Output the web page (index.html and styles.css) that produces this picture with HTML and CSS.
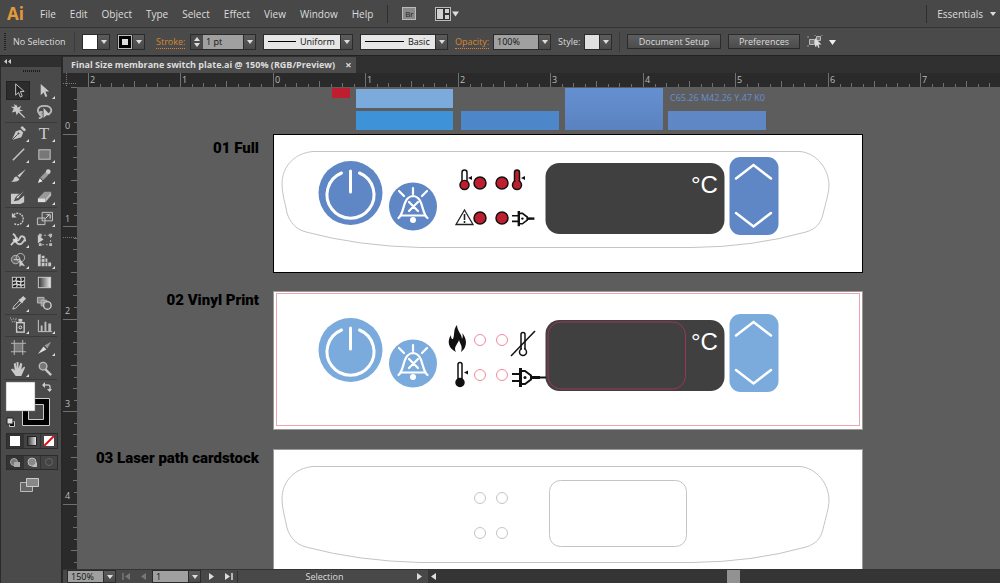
FILE: index.html
```html
<!DOCTYPE html>
<html lang="en">

<head>
    <meta charset="UTF-8">
    <title>Final Size membrane switch plate.ai</title>
    <link rel="stylesheet" href="styles.css">
</head>

<body>
    <header class="menubar">
        <span class="logo">Ai</span>
        <nav class="menus">
            <button>File</button>
            <button>Edit</button>
            <button>Object</button>
            <button>Type</button>
            <button>Select</button>
            <button>Effect</button>
            <button>View</button>
            <button>Window</button>
            <button>Help</button>
        </nav>
        <span class="divider"></span>
        <button class="bridge">Br</button>
        <button class="arrange" aria-label="Arrange documents">
            <svg width="24" height="14" viewBox="0 0 24 14">
                <rect x="0.5" y="0.5" width="15" height="13" fill="#333" stroke="#bbb" />
                <path d="M2 2h6v10H2zM10 2h4v4h-4zM10 8h4v4h-4z" fill="#d0d0d0" />
                <path d="M17 4.500h7l-3.500 5z" fill="#ddd" />
            </svg>
        </button>
        <button class="workspace">Essentials <span class="caret"></span></button>
    </header>

    <div class="options">
        <span class="grip"></span>
        <span class="status">No Selection</span>
        <span class="sep"></span>
        <div class="combo">
            <button class="swatch white" aria-label="Fill"></button>
            <button class="drop" aria-label="Fill menu"><span class="caret"></span></button>
        </div>
        <div class="combo">
            <button class="swatch ring" aria-label="Stroke color"></button>
            <button class="drop" aria-label="Stroke color menu"><span class="caret"></span></button>
        </div>
        <label class="link first" for="stroke"><span>Stroke:</span></label>
        <div class="combo stroke">
            <button class="spin" aria-label="Step"><span class="caret up"></span><span class="caret"></span></button>
            <input type="text" id="stroke" value="1 pt">
            <button class="drop" aria-label="Stroke weights"><span class="caret"></span></button>
        </div>
        <div class="combo profile">
            <span class="line"></span>
            <select aria-label="Width profile">
                <option>Uniform</option>
            </select>
            <span class="drop"><span class="caret"></span></span>
        </div>
        <div class="combo brush">
            <span class="line"></span>
            <select aria-label="Brush">
                <option>Basic</option>
            </select>
            <span class="drop"><span class="caret"></span></span>
        </div>
        <label class="link second" for="opacity"><span>Opacity:</span></label>
        <div class="combo opacity">
            <input type="text" id="opacity" value="100%">
            <button class="drop" aria-label="Opacity values"><span class="caret"></span></button>
        </div>
        <span class="style-label">Style:</span>
        <div class="combo">
            <button class="swatch grey" aria-label="Style"></button>
            <button class="drop" aria-label="Style menu"><span class="caret"></span></button>
        </div>
        <span class="sep"></span>
        <button class="push wide">Document Setup</button>
        <button class="push">Preferences</button>
        <button class="similar" aria-label="Select similar objects">
            <svg width="30" height="14" viewBox="0 0 30 14">
                <path d="M2.500 4.500h5v5h-5zM9.500 1.500h4v4h-4z" fill="#777" stroke="#bbb" />
                <path d="M0 2h2M0 11h2M8 11h2M7 0h2M14 0h2" stroke="#999" />
                <path d="M8 3v9l2-2 1.500 3 1-.500-1-3h3z" fill="#ddd" />
                <path d="M22 5h7l-3.500 5z" fill="#eee" />
            </svg>
        </button>
    </div>

    <div class="main">
        <aside class="tools">
            <div class="tools-head">
                <svg width="8" height="6" viewBox="0 0 8 6"><path d="M3 0v5L0 2.500zM7 0v5L4 2.500z" fill="#ccc" /></svg>
            </div>
            <div class="tools-grip"><span></span></div>

            <div class="group">
                <button class="tool active" aria-label="Selection"><svg viewBox="0 0 18 18"><path d="M6 2v12l3-3 2 5 2-1-2-5h4z" fill="#222" stroke="#ccc" /></svg></button>
                <button class="tool more" aria-label="Direct selection"><svg viewBox="0 0 18 18"><path d="M5 2v12l3-3 2 5 2-1-2-5h4z" fill="#c8c8c8" /></svg></button>
                <button class="tool" aria-label="Magic wand"><svg viewBox="0 0 18 18"><path d="M7 1l1 4 4-2-2 4 4 1-4 1 6 6-1 1-6-6-2 3-1-4-4 1 2-4-3-2 4 0-1-3 3 2z" fill="#c8c8c8" /></svg></button>
                <button class="tool" aria-label="Lasso"><svg viewBox="0 0 18 18"><path d="M7 12C0 12 0 3 9 3s9 8 3 9M7 10c-3-2-5 2-2 3s0 3-2 3" fill="none" stroke="#b8b8b8" stroke-width="2" /><path d="M8 5v11l3-3h4z" fill="#ccc" /></svg></button>
            </div>
            <div class="group">
                <button class="tool more" aria-label="Pen"><svg viewBox="0 0 18 18"><path d="M2 16L6 7l5-2 3 3-2 5z" fill="#c8c8c8" /><path d="M11 3l2-2 4 4-2 2z" fill="#c8c8c8" /><path d="M2 16l6-6" stroke="#444" /><circle cx="9" cy="9" r="1" fill="#444" /></svg></button>
                <button class="tool more serif">T</button>
                <button class="tool more" aria-label="Line"><svg viewBox="0 0 18 18"><path d="M3 15L15 3" stroke="#c8c8c8" stroke-width="1.500" /></svg></button>
                <button class="tool more" aria-label="Rectangle"><svg viewBox="0 0 18 18"><rect x="3" y="4" width="12" height="10" fill="#777" stroke="#c8c8c8" /></svg></button>
                <button class="tool" aria-label="Paintbrush"><svg viewBox="0 0 18 18"><path d="M17 2l-7 9-2-2z" fill="#c8c8c8" /><path d="M1 15c4 0 2-5 6-5l3 3c-2 3-6 3-9 2z" fill="#c8c8c8" /></svg></button>
                <button class="tool more" aria-label="Pencil"><svg viewBox="0 0 18 18"><path d="M2 17l2-5 3 3z" fill="#eee" /><path d="M4.500 11l6-6 3 3-6 6z" fill="#999" /><circle cx="13" cy="5" r="2.500" fill="#ccc" /></svg></button>
                <button class="tool" aria-label="Blob brush"><svg viewBox="0 0 18 18"><path d="M1 6h9L6 10l-2 4 5-1 6-5v7l-4 2H1z" fill="#c8c8c8" /><path d="M17 1l-6 7-2 3-3 1 1-3 3-2z" fill="#ddd" stroke="#444" /></svg></button>
                <button class="tool more" aria-label="Eraser"><svg viewBox="0 0 18 18"><path d="M2 11l7-7h7l-6 7z" fill="#999" /><path d="M2 11h8v4H2z" fill="#ddd" /><path d="M10 11l6-7v4l-6 7z" fill="#bbb" /></svg></button>
            </div>
            <div class="group">
                <button class="tool more" aria-label="Rotate"><svg viewBox="0 0 18 18"><path d="M4 5a6 6 0 1 1 0 9" fill="none" stroke="#c8c8c8" stroke-width="1.500" stroke-dasharray="2 1" /><path d="M2 3v5h5z" fill="#c8c8c8" /></svg></button>
                <button class="tool more" aria-label="Scale"><svg viewBox="0 0 18 18"><path d="M6.500 2.500h11v9h-11zM1.500 8.500h8v7h-8z" fill="#555" stroke="#c8c8c8" /><path d="M10 9l4-4M11 5h4v4" fill="none" stroke="#ddd" /></svg></button>
                <button class="tool more" aria-label="Width"><svg viewBox="0 0 18 18"><path d="M3 3c5 2 2 7 5 7s2-6 6-4-1 4 3 4M1 15l7-8M3 9c4 1 3 5 7 5s3-4 6-4" fill="none" stroke="#c8c8c8" stroke-width="2" /><circle cx="6" cy="10" r="2" fill="#ddd" /></svg></button>
                <button class="tool" aria-label="Free transform"><svg viewBox="0 0 18 18"><path d="M4.500 4.500h11v10h-11z" fill="none" stroke="#bbb" stroke-dasharray="2 2" /><path d="M3 3h3v3H3zM14 3h3v3h-3zM14 13h3v3h-3zM3 13h3v3H3z" fill="#bbb" /><path d="M2 4v9l6-4z" fill="#ccc" /></svg></button>
                <button class="tool more" aria-label="Shape builder"><svg viewBox="0 0 18 18"><circle cx="6" cy="8" r="4.500" fill="#666" stroke="#bbb" /><circle cx="11" cy="6" r="4.500" fill="none" stroke="#bbb" /><path d="M10 7v9l2-2 4 1z" fill="#ccc" /><path d="M4 8h6" stroke="#ccc" /></svg></button>
                <button class="tool more" aria-label="Perspective grid"><svg viewBox="0 0 18 18"><path d="M2 3l3-1v13H2zM6 4h3v11H6zM10 7h2v8h-2zM13 11h3v4h-3z" fill="#c8c8c8" /><path d="M5 7h4M5 11h7" stroke="#555" /></svg></button>
            </div>
            <div class="group">
                <button class="tool" aria-label="Mesh"><svg viewBox="0 0 18 18"><rect x="2.500" y="3.500" width="13" height="11" fill="#222" stroke="#ccc" /><path d="M3 8c5-3 8 3 12-1M3 12c4-4 8 2 12-1M7 4c-3 4 3 6 0 10M11 4c3 3-2 6 1 10" fill="none" stroke="#ddd" stroke-width="1.300" /></svg></button>
                <button class="tool" aria-label="Gradient"><svg viewBox="0 0 18 18"><defs><linearGradient id="grey-ramp"><stop offset="0" stop-color="#333" /><stop offset="1" stop-color="#eee" /></linearGradient></defs><rect x="2.500" y="3.500" width="13" height="11" fill="url(#grey-ramp)" stroke="#ccc" /></svg></button>
                <button class="tool more" aria-label="Eyedropper"><svg viewBox="0 0 18 18"><path d="M3 15l1-3 6-6 2 2-6 6z" fill="none" stroke="#ccc" /><path d="M9 5l2-1 3-3 3 3-3 3-1 2z" fill="#ccc" /></svg></button>
                <button class="tool" aria-label="Blend"><svg viewBox="0 0 18 18"><path d="M1.500 2.500h7v6h-7zM5.500 5.500h6v6h-6z" fill="#888" stroke="#bbb" /><circle cx="12" cy="11" r="4" fill="#555" stroke="#ccc" stroke-width="1.500" /></svg></button>
            </div>
            <div class="group">
                <button class="tool more" aria-label="Symbol sprayer"><svg viewBox="0 0 18 18"><path d="M1 3h1M3 2h1M5 3h1M2 5h1M4 5h1M6 2h1M0 1h1M6 5h1" stroke="#ccc" /><rect x="7" y="6" width="8" height="10" fill="#444" stroke="#ccc" stroke-width="1.500" /><path d="M9 2h4v3H9z" fill="#ccc" /><circle cx="11" cy="11" r="1.500" fill="none" stroke="#eee" /></svg></button>
                <button class="tool more" aria-label="Graph"><svg viewBox="0 0 18 18"><path d="M2.500 3v12.500H17" fill="none" stroke="#ccc" /><path d="M5 9h2v6H5zM9 5h2v10H9zM13 7h3v8h-3z" fill="#bbb" /></svg></button>
            </div>
            <div class="group">
                <button class="tool" aria-label="Artboard"><svg viewBox="0 0 18 18"><rect x="4.500" y="4.500" width="9" height="9" fill="#777" /><path d="M4.500 1v16M13.500 1v16M1 4.500h16M1 13.500h16" stroke="#bbb" /></svg></button>
                <button class="tool more" aria-label="Slice"><svg viewBox="0 0 18 18"><path d="M2 16l6-8 3 3z" fill="#ddd" /><path d="M9 7l7-4-4 7z" fill="#999" /></svg></button>
                <button class="tool more" aria-label="Hand"><svg viewBox="0 0 18 18"><path d="M6 17L1 10l2-1 2 2-1-7 2-1 1 6V2h2v7l2-6 2 1-1 6 3-3 1 1-4 9z" fill="#c8c8c8" /></svg></button>
                <button class="tool" aria-label="Zoom"><svg viewBox="0 0 18 18"><circle cx="7.500" cy="6.500" r="4" fill="#777" stroke="#bbb" stroke-width="1.500" /><path d="M10 10l6 6" stroke="#c8c8c8" stroke-width="2.500" /></svg></button>
            </div>

            <div class="paint">
                <svg width="52" height="50" viewBox="0 0 52 50">
                    <path d="M17.500 18.500h27v27h-27z" fill="#000" stroke="#ccc" />
                    <path d="M23.500 24.500h15v15h-15z" fill="#494949" stroke="#ccc" />
                    <path d="M1 2h29v29H1z" fill="#fff" stroke="#777" stroke-width=".5" />
                    <path d="M39 5h4a2 2 0 0 1 2 2v4" fill="none" stroke="#bbb" stroke-width="1.500" />
                    <path d="M40 2v6l-3-3zM42 9h5l-2.500 3z" fill="#ccc" />
                    <path d="M4.500 41.500h5v5h-5z" fill="#111" stroke="#ccc" />
                    <path d="M2 38h6v6H2z" fill="#ddd" stroke="#222" />
                </svg>
            </div>
            <div class="modes">
                <button aria-label="Color"><svg width="16" height="14"><path d="M3 2h10v10H3z" fill="#fff" /></svg></button>
                <button aria-label="Gradient fill"><svg width="16" height="14"><path d="M3.500 2.500h9v9h-9z" fill="url(#grey-ramp)" stroke="#222" /></svg></button>
                <button aria-label="None"><svg width="16" height="14"><path d="M3 2h10v10H3z" fill="#fff" /><path d="M3 12L13 2" stroke="#d11" stroke-width="2" /></svg></button>
            </div>
            <div class="modes draw">
                <button aria-label="Draw normal"><svg width="16" height="13"><circle cx="7" cy="6" r="3.500" fill="#777" stroke="#aaa" /><path d="M7 6h6v5H7z" fill="#aaa" /></svg></button>
                <button aria-label="Draw behind"><svg width="16" height="13"><circle cx="8" cy="6" r="4" fill="#888" stroke="#bbb" /><path d="M8 11h5V6z" fill="#bbb" /></svg></button>
                <button aria-label="Draw inside"><svg width="16" height="13"><circle cx="8" cy="6" r="3.500" fill="none" stroke="#666" /></svg></button>
            </div>
            <button class="screen" aria-label="Screen mode"><svg width="20" height="14" viewBox="0 0 20 14"><path d="M.5 4.500h12v9H.5z" fill="#666" stroke="#bbb" /><path d="M6.500 .5h12v8h-12z" fill="#888" stroke="#ccc" /></svg></button>
        </aside>

        <section class="document">
            <div class="tabs">
                <div class="tab">Final Size membrane switch plate.ai @ 150% (RGB/Preview) <button aria-label="Close">×</button></div>
            </div>

            <svg class="ruler-x" width="100%" height="14">
                <defs>
                    <path id="inch-x" d="M.5 0v14M12.500 11v3M23.500 10v4M35.500 11v3M46.500 8v6M58.500 11v3M69.500 10v4M81.500 11v3" />
                </defs>
                <g class="ticks">
                    <use href="#inch-x" x="25" />
                    <use href="#inch-x" x="117" />
                    <use href="#inch-x" x="210" />
                    <use href="#inch-x" x="302" />
                    <use href="#inch-x" x="395" />
                    <use href="#inch-x" x="487" />
                    <use href="#inch-x" x="580" />
                    <use href="#inch-x" x="672" />
                    <use href="#inch-x" x="765" />
                    <use href="#inch-x" x="857" />
                </g>
                <rect class="corner" width="14" height="14" />
                <path class="dots" d="M3.500 0v14M0 10.500h14" />
                <g class="numbers">
                    <text x="27" y="10">2</text>
                    <text x="119" y="10">1</text>
                    <text x="212" y="10">0</text>
                    <text x="304" y="10">1</text>
                    <text x="397" y="10">2</text>
                    <text x="489" y="10">3</text>
                    <text x="582" y="10">4</text>
                    <text x="674" y="10">5</text>
                    <text x="767" y="10">6</text>
                    <text x="859" y="10">7</text>
                </g>
            </svg>

            <div class="view">
                <svg class="ruler-y" width="14" height="100%">
                    <defs>
                        <path id="inch-y" d="M0 .5h14M11 12.500h3M10 23.500h4M11 35.500h3M8 46.500h6M11 58.500h3M10 69.500h4M11 81.500h3" />
                    </defs>
                    <g class="ticks">
                        <use href="#inch-y" y="-46" />
                        <use href="#inch-y" y="47" />
                        <use href="#inch-y" y="139" />
                        <use href="#inch-y" y="232" />
                        <use href="#inch-y" y="324" />
                        <use href="#inch-y" y="417" />
                    </g>
                    <path class="dots" d="M0 150.500h14" />
                    <g class="numbers">
                        <text x="2" y="42">0</text>
                        <text x="2" y="135">1</text>
                        <text x="2" y="227">2</text>
                        <text x="2" y="320">3</text>
                        <text x="2" y="412">4</text>
                    </g>
                </svg>

                <div class="canvas">
                    <!-- colour swatches above the first artboard -->
                    <svg class="swatches" width="440" height="44">
                        <defs>
                            <linearGradient id="blue-ramp" x2="0" y2="1"><stop offset="0" stop-color="#6590d0" /><stop offset="1" stop-color="#5a82c0" /></linearGradient>
                        </defs>
                        <rect x="2" y="1" width="18" height="10" fill="#be1e2d" />
                        <rect x="26" y="2" width="97" height="19" fill="#7aabdc" />
                        <rect x="26" y="24" width="97" height="19" fill="#3e93d8" />
                        <rect x="131" y="24" width="98" height="19" fill="#4e87c9" />
                        <rect x="235" y="1" width="98" height="42" fill="url(#blue-ramp)" />
                        <rect x="338" y="24" width="98" height="19" fill="#5f87c5" />
                        <text x="340" y="14">C65.26 M42.26 Y.47 K0</text>
                    </svg>

                    <h2 class="name name-full">01 Full</h2>
                    <h2 class="name name-vinyl">02 Vinyl Print</h2>
                    <h2 class="name name-laser">03 Laser path cardstock</h2>

                    <svg class="board full" viewBox="0 0 590 139">
                        <defs>
                            <path id="plate" d="M40 17.500H527C543 19 556 34 556 52C556 58 553 68 550 80C548 89 543 95 533 98Q480 113 419 113.500H147Q85 112 33 98C22 95 17 88 14 79C12 68 9 60 9 50C9 32 22 19 40 17.500z" />
                            <g id="keys">
                                <circle cx="77.500" cy="59" r="32" />
                                <circle cx="140" cy="72.500" r="24" />
                                <rect x="456.500" y="23" width="49" height="78" rx="11" />
                                <g fill="none" stroke="#fff" stroke-width="3" stroke-linecap="round" stroke-linejoin="round">
                                    <path d="M68.500 39a23.500 23.500 0 1 0 18 0M77.500 37v21" />
                                    <g stroke-width="2.200">
                                        <path d="M125.500 84C132 79 129 63 140 62C151 63 148 79 154.500 84L152 81.500H128z" />
                                        <path d="M136 68l9 9M145 68l-9 9M140 54v6M126 57l5 5M154 57l-5 5" />
                                    </g>
                                    <path d="M463 44.500L480.500 31L498 44.500M463 79L480.500 92.500L498 79" stroke-width="2.500" stroke-linejoin="miter" />
                                </g>
                                <circle cx="140" cy="86" r="3" fill="#fff" />
                            </g>
                            <rect id="display" x="272.500" y="29" width="179" height="71" rx="14" fill="#404040" />
                            <!-- plug, prongs to the left -->
                            <g id="plug">
                                <path d="M0 6h8M0 13h8M17 9.500h6" stroke-width="2" />
                                <path d="M9 3h4l6 4.500v4L13 16H9z" fill="#fff" stroke-width="2" />
                                <path d="M8.500 0v19" stroke-width="3" />
                                <circle cx="13" cy="9.500" r="1.500" fill="#111" stroke="none" />
                                <path d="M19 9.500h9" stroke-width="3" />
                            </g>
                        </defs>
                        <use href="#plate" class="cut" />
                        <use href="#keys" fill="#5f87c5" />
                        <use href="#display" />
                        <text class="unit" x="418" y="59">°C</text>
                        <g fill="#be1e2d" stroke="#111" stroke-width="1.500">
                            <circle cx="207" cy="49" r="6" />
                            <circle cx="229" cy="49" r="6" />
                            <circle cx="207" cy="84" r="6" />
                            <circle cx="229" cy="84" r="6" />
                            <path d="M189 48V38.500a2.500 2.500 0 0 1 5 0V48" fill="#fff" />
                            <circle cx="191.500" cy="51" r="4.500" />
                            <path d="M241.500 48V38.500a2.500 2.500 0 0 1 5 0V48" />
                            <circle cx="244" cy="51" r="4.500" />
                            <path d="M190 47h3v4h-3zM242.500 45h3v6h-3z" stroke="none" />
                        </g>
                        <path d="M199 42v4l-4-2zM252 42v4l-4-2z" fill="#111" />
                        <g fill="none" stroke="#222">
                            <path d="M191.500 76L200 90.500h-17z" stroke-width="1.300" />
                            <path d="M191.500 80v6M191.500 87v2" stroke-width="1.600" />
                            <use href="#plug" transform="translate(239 77) scale(.8)" stroke="#111" />
                        </g>
                    </svg>

                    <svg class="board vinyl" viewBox="0 0 590 139">
                        <rect x="3.500" y="2.500" width="583" height="132" fill="none" stroke="#f0a4b0" />
                        <use href="#keys" fill="#7aabdc" />
                        <use href="#display" />
                        <rect x="275" y="31" width="137.500" height="67" rx="13" fill="none" stroke="#9c3558" />
                        <text class="unit" x="418" y="59">°C</text>
                        <g fill="none" stroke="#f08a9c">
                            <circle cx="207" cy="49" r="5.500" />
                            <circle cx="229" cy="49" r="5.500" />
                            <circle cx="207" cy="84" r="5.500" />
                            <circle cx="229" cy="84" r="5.500" />
                        </g>
                        <path d="M183 61C175 57 174 50 178 44C178 48 179 48 180 48C182 43 180 39 184 34C184 40 189 43 189 48C190 46 190 44 189 42C194 47 195 56 188 61C190 55 187 53 186 49C185 53 180 56 183 61z" fill="#111" />
                        <g fill="#fff" stroke="#111" stroke-width="1.500">
                            <path d="M248 58V43.500a2 2 0 0 1 4 0V58" />
                            <circle cx="250" cy="61" r="3.500" />
                            <path d="M249 56h2v4h-2z" stroke="none" />
                            <path d="M238 65L262 40" />
                            <path d="M185 88V73.500a2 2 0 0 1 4 0V88" />
                            <circle cx="187" cy="91.500" r="4" fill="#111" />
                            <path d="M195 79.500v4l-4-2z" fill="#111" stroke="none" />
                            <use href="#plug" x="239" y="77" />
                            <path d="M264 86.500h9" stroke-width="2" />
                        </g>
                    </svg>

                    <svg class="board laser" viewBox="0 0 590 139">
                        <use href="#plate" class="cut" />
                        <g class="cut">
                            <circle cx="207" cy="49" r="5.500" />
                            <circle cx="229" cy="49" r="5.500" />
                            <circle cx="207" cy="84" r="5.500" />
                            <circle cx="229" cy="84" r="5.500" />
                            <rect x="276.500" y="31.500" width="137" height="66" rx="11" />
                        </g>
                    </svg>
                </div>
            </div>

            <footer class="statusbar">
                <div class="combo small">
                    <input type="text" value="150%" aria-label="Zoom level">
                    <button class="drop" aria-label="Zoom values"><span class="caret"></span></button>
                </div>
                <button class="page" aria-label="First artboard" disabled><svg width="9" height="8"><path d="M1 0v7" stroke="#777" stroke-width="1.500" /><path d="M8 0v7L3 3.500z" fill="#777" /></svg></button>
                <button class="page" aria-label="Previous artboard" disabled><svg width="9" height="8"><path d="M7 0v7L2 3.500z" fill="#777" /></svg></button>
                <div class="combo small">
                    <input type="text" value="1" aria-label="Artboard">
                    <button class="drop" aria-label="Artboard list"><span class="caret"></span></button>
                </div>
                <button class="page" aria-label="Next artboard"><svg width="9" height="8"><path d="M2 0v7l5-3.500z" fill="#ddd" /></svg></button>
                <button class="page" aria-label="Last artboard"><svg width="9" height="8"><path d="M8 0v7" stroke="#ddd" stroke-width="1.500" /><path d="M1 0v7l5-3.500z" fill="#ddd" /></svg></button>
                <span class="current">Selection</span>
                <button class="page" aria-label="Status menu"><svg width="9" height="8"><path d="M2 0v7l5-3.500z" fill="#ddd" /></svg></button>
                <div class="scroll">
                    <svg width="6" height="8"><path d="M5 0v7L0 3.500z" fill="#ddd" /></svg>
                    <span class="thumb"></span>
                </div>
            </footer>
        </section>
    </div>
</body>

</html>
```

FILE: styles.css
```css
* {
    box-sizing: border-box;
}

body {
    margin: 0;
    height: 100vh;
    display: flex;
    flex-direction: column;
    overflow: hidden;
    background: #484848;
    color: #ddd;
    font-family: "Open Sans", "Noto Sans", sans-serif;
    font-size: 9px;
    line-height: 12px;
}

button,
input,
select {
    margin: 0;
    padding: 0;
    border: none;
    border-radius: 0;
    background: none;
    color: inherit;
    font: inherit;
}

svg {
    display: block;
    flex: none;
}

.caret {
    flex: none;
    border: 3px solid transparent;
    border-top: 4px solid #ddd;
    border-bottom: none;
}

.caret.up {
    border-top: none;
    border-bottom: 4px solid #ddd;
}

/* menu bar */
.menubar {
    flex: none;
    display: flex;
    align-items: center;
    height: 27px;
    padding-left: 7px;
    background: #484848;
    font-size: 10px;
}

.logo {
    width: 33px;
    color: #e29a3c;
    font-size: 17px;
    font-weight: bold;
    line-height: 20px;
}

.menus {
    display: flex;
    gap: 14px;
}

.divider {
    height: 18px;
    margin-left: 14px;
    border-left: 1px solid #2e2e2e;
}

.bridge {
    width: 14px;
    height: 13px;
    margin: 0 19px 0 14px;
    background: #8a8a8a;
    border: 1px solid #bbb;
    color: #222;
    font-size: 8px;
    line-height: 10px;
}

.workspace {
    display: flex;
    align-items: center;
    gap: 7px;
    height: 18px;
    margin-left: auto;
    padding: 0 4px 0 10px;
    border-left: 1px solid #2e2e2e;
}

/* options bar */
.options {
    flex: none;
    display: flex;
    align-items: center;
    gap: 7px;
    height: 29px;
    padding-left: 4px;
    background: #4a4a4a;
    border-top: 1px solid #333;
    border-bottom: 1px solid #222;
    white-space: nowrap;
}

.grip {
    width: 2px;
    height: 18px;
    background: repeating-linear-gradient(#222 0 1px, #4a4a4a 1px 2px);
}

.status {
    width: 54px;
}

.sep {
    flex: none;
    width: 1px;
    height: 20px;
    background: #3a3a3a;
}

.combo {
    flex: none;
    display: flex;
    height: 16px;
    border: 1px solid #2b2b2b;
}

.combo input {
    flex: 1;
    min-width: 0;
    padding-left: 3px;
    background: #a0a0a0;
    color: #111;
}

.drop {
    flex: none;
    display: flex;
    align-items: center;
    justify-content: center;
    width: 12px;
    border-left: 1px solid #2b2b2b;
    background: linear-gradient(#5c5c5c, #4a4a4a);
}

.swatch {
    width: 14px;
}

.white {
    background: #fff;
}

.grey {
    background: #e0e0e0;
}

.ring {
    background: #ddd;
    border: 4px solid #000;
    outline: 1px solid #bbb;
    outline-offset: -1px;
}

.link {
    flex: none;
    color: #d98632;
}

.link span {
    border-bottom: 1px dotted #d98632;
}

.first {
    width: 31px;
    padding-left: 4px;
}

.second {
    width: 31px;
}

.style-label {
    flex: none;
    width: 19px;
}

.stroke {
    width: 66px;
}

.spin {
    display: flex;
    flex-direction: column;
    align-items: center;
    justify-content: center;
    gap: 2px;
    width: 12px;
}

.profile {
    width: 90px;
}

.brush {
    width: 88px;
}

.profile,
.brush {
    background: #e6e6e6;
}

.line {
    flex: 1;
    align-self: center;
    height: 1px;
    margin: 0 4px;
    background: #000;
}

.combo select {
    appearance: none;
    padding-right: 5px;
    color: #111;
}

.opacity {
    width: 58px;
}

.push {
    flex: none;
    width: 72px;
    height: 15px;
    background: linear-gradient(#5e5e5e, #4c4c4c);
    border: 1px solid #2b2b2b;
    line-height: 12px;
}

.wide {
    width: 94px;
}

/* tool panel */
.main {
    flex: 1;
    display: flex;
    min-height: 0;
    background: #282828;
}

.tools {
    flex: none;
    width: 61px;
    margin-right: 2px;
    border-left: 1px solid #2b2b2b;
    background: #4a4a4a;
}

.tools-head {
    height: 11px;
    padding: 3px;
    background: #2f2f2f;
}

.tools-grip {
    display: flex;
    justify-content: center;
    height: 13px;
    padding-top: 3px;
}

.tools-grip span {
    width: 17px;
    height: 2px;
    background: repeating-linear-gradient(90deg, #1c1c1c 0 1px, #4a4a4a 1px 2px);
}

.group {
    display: grid;
    grid-template-columns: 26px 26px;
    margin: 0 4px;
    border-bottom: 1px solid #3a3a3a;
}

.tool {
    display: flex;
    position: relative;
    align-items: center;
    justify-content: center;
    height: 21px;
}

.tool svg {
    width: 17px;
    height: 17px;
}

.tool.active {
    background: #2c2c2c;
    border: 1px solid #222;
    height: 19px;
    width: 24px;
    margin: 1px;
}

.more::after {
    content: "";
    position: absolute;
    right: 2px;
    bottom: 2px;
    border-left: 3px solid transparent;
    border-bottom: 3px solid #ddd;
}

.serif {
    color: #ccc;
    font-family: "Liberation Serif", serif;
    font-size: 17px;
    line-height: 20px;
}

.paint {
    height: 53px;
    padding-left: 4px;
}

.modes {
    display: flex;
    width: 52px;
    margin: 0 5px 6px;
    background: #444;
    border: 1px solid #2b2b2b;
}

.modes button:first-child {
    background: #333;
}

.modes button + button {
    border-left: 1px solid #333;
}

.screen {
    margin: 2px 0 0 19px;
}

/* document window */
.document {
    flex: 1;
    display: flex;
    flex-direction: column;
    min-width: 0;
}

.tabs {
    flex: none;
    display: flex;
    height: 17px;
    padding-top: 1px;
    background: #303030;
}

.tab {
    display: flex;
    align-items: center;
    gap: 10px;
    padding: 0 5px 0 8px;
    background: #4d4d4d;
    font-weight: bold;
    white-space: nowrap;
}

.tab button {
    font-size: 11px;
}

.ruler-x,
.ruler-y {
    background: #2a2a2a;
}

.ticks {
    stroke: #707070;
}

.corner {
    fill: #2a2a2a;
}

.dots {
    stroke: #777;
    stroke-dasharray: 1 1;
}

.numbers {
    fill: #bbb;
    font-size: 9px;
}

.view {
    flex: 1;
    display: flex;
    min-height: 0;
}

.canvas {
    flex: 1;
    position: relative;
    overflow: hidden;
    background: #5d5d5d;
}

.swatches {
    position: absolute;
    left: 253px;
    top: 0;
}

.swatches text {
    fill: #6590d0;
    font-size: 9px;
}

.name {
    position: absolute;
    left: 0;
    width: 182px;
    margin: 0;
    color: #000;
    font-family: Roboto, sans-serif;
    font-size: 15px;
    font-weight: 900;
    line-height: 18px;
    text-align: right;
    white-space: nowrap;
}

.name-full {
    top: 52px;
}

.name-vinyl {
    top: 204px;
}

.name-laser {
    top: 362px;
}

.board {
    position: absolute;
    left: 196px;
    width: 590px;
    height: 139px;
    background: #fff;
    outline: 1px solid #999;
    outline-offset: -1px;
}

.full {
    top: 47px;
    outline-color: #000;
}

.vinyl {
    top: 204px;
}

.laser {
    top: 362px;
}

.cut {
    fill: none;
    stroke: #c4c4c4;
}

.unit {
    fill: #fff;
    font-family: "Liberation Sans", sans-serif;
    font-size: 24px;
}

/* status bar */
.statusbar {
    flex: none;
    display: flex;
    align-items: center;
    height: 14px;
    padding-left: 4px;
    background: #484848;
    border-top: 1px solid #333;
}

.small {
    width: 49px;
    height: 13px;
}

.page {
    padding: 0 4px;
}

.small + .page {
    margin-left: 2px;
}

.current {
    width: 174px;
    text-align: center;
    border-left: 1px solid #333;
}

.scroll {
    flex: 1;
    display: flex;
    align-items: center;
    height: 13px;
    padding-left: 3px;
    background: #353535;
}

.thumb {
    width: 13px;
    height: 13px;
    margin-left: 51%;
    background: #929292;
}
```
